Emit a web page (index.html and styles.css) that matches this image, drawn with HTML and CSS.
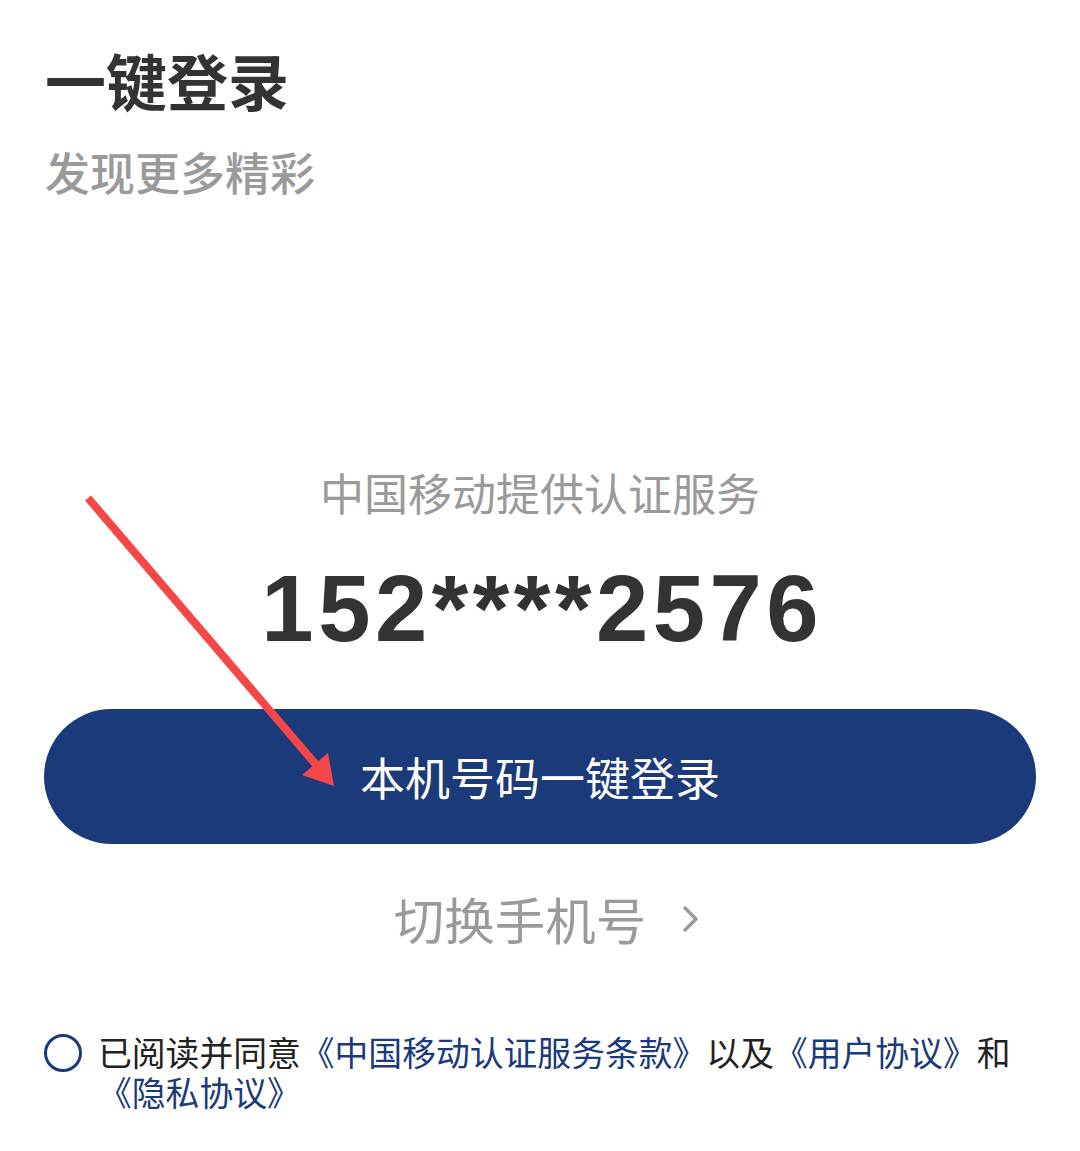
FILE: index.html
```html
<!DOCTYPE html>
<html lang="zh-CN">
<head>
    <meta charset="UTF-8">
    <meta name="viewport" content="width=device-width, initial-scale=1.0">
    <title>一键登录</title>
    <link rel="stylesheet" href="styles.css">
</head>
<body>
    <div class="page">
        <!-- Header -->
        <div class="header">
            <h1 class="title">一键登录</h1>
            <p class="subtitle">发现更多精彩</p>
        </div>

        <div class="auth">
            <p class="carrier">中国移动提供认证服务</p>
            <div class="phone">152****2576</div>
            <button class="login-btn">本机号码一键登录</button>
            <a class="switch" href="#">切换手机号
                <svg class="chevron" width="18" height="28" viewBox="0 0 18 28">
                    <polyline points="3,3 14,14 3,25" fill="none" stroke="#9a9a9a" stroke-width="3.5" stroke-linecap="round" stroke-linejoin="round"/>
                </svg>
            </a>
        </div>

        <div class="agree">
            <span class="radio"></span>
            <p class="agree-text">已阅读并同意<a href="#">《中国移动认证服务条款》</a>以及<a href="#">《用户协议》</a>和<a href="#">《隐私协议》</a></p>
        </div>

        <!-- Annotation arrow -->
        <svg class="arrow" width="1080" height="1151" viewBox="0 0 1080 1151">
            <line x1="88" y1="498" x2="318" y2="767" stroke="#f64748" stroke-width="8" stroke-linecap="butt"/>
            <polygon points="334,786 302,775 328,753" fill="#f64748"/>
        </svg>
    </div>
</body>
</html>
```

FILE: styles.css
```css
body {
    margin: 0;
    background-color: #ffffff;
    font-family: "Noto Sans CJK SC", "Noto Sans", sans-serif;
}

.page {
    position: relative;
    width: 1080px;
    height: 1151px;
    padding: 50px 44px 0 44px;
    box-sizing: border-box;
}

.title {
    margin: 0;
    font-size: 61px;
    line-height: 60px;
    font-weight: 700;
    color: #333333;
    padding-left: 1px;
}

.subtitle {
    margin: 40px 0 0 0;
    font-size: 45px;
    line-height: 44px;
    font-weight: 500;
    color: #9a9a9a;
    padding-left: 1px;
}

.auth {
    display: flex;
    flex-direction: column;
    align-items: center;
    margin-top: 276px;
}

.carrier {
    margin: 0;
    font-size: 44px;
    line-height: 44px;
    color: #9a9a9a;
}

.phone {
    margin-top: 48px;
    font-family: "Liberation Sans", Arial, sans-serif;
    font-size: 94px;
    line-height: 94px;
    font-weight: 700;
    color: #333333;
    letter-spacing: 4.5px;
    padding-left: 4.5px;
}

.login-btn {
    margin-top: 53px;
    width: 100%;
    height: 135px;
    border: none;
    border-radius: 68px;
    background-color: #1a3a7a;
    color: #ffffff;
    font-family: inherit;
    font-size: 45px;
    cursor: pointer;
}

.switch {
    display: flex;
    align-items: center;
    gap: 36px;
    margin-top: 50px;
    padding-left: 14px;
    font-size: 50.5px;
    line-height: 49px;
    color: #9a9a9a;
    text-decoration: none;
}

.chevron {
    display: block;
}

.agree {
    display: flex;
    align-items: flex-start;
    margin-top: 89px;
}

.radio {
    flex: none;
    width: 32px;
    height: 32px;
    margin-top: 2px;
    border: 3px solid #1a3a7a;
    border-radius: 50%;
    margin-right: 16px;
}

.agree-text {
    margin: 0;
    font-size: 33.8px;
    line-height: 40px;
    color: #222222;
}

.agree-text a {
    color: #1a3a7a;
    text-decoration: none;
}

.arrow {
    position: absolute;
    top: 0;
    left: 0;
    pointer-events: none;
}
```
